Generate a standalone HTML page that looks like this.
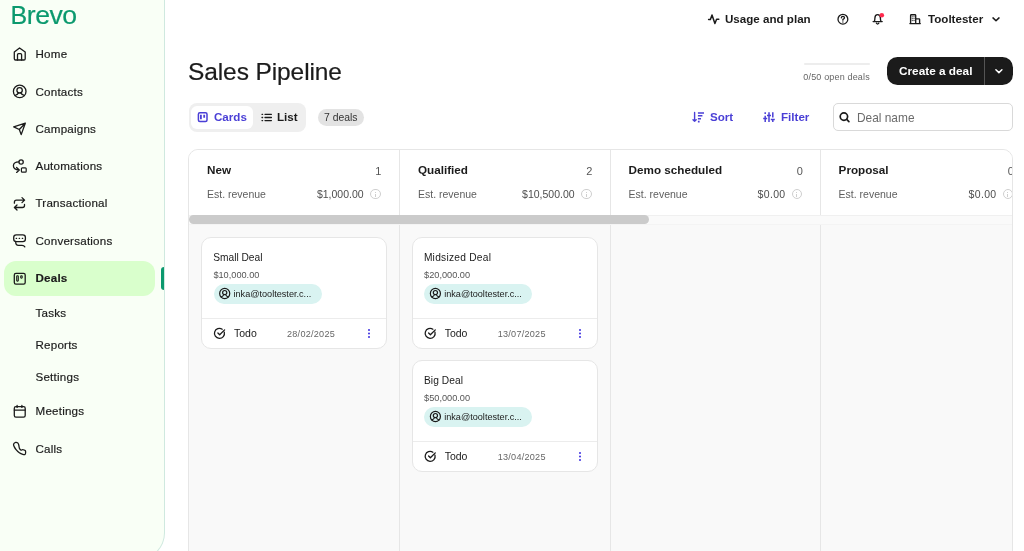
<!DOCTYPE html>
<html lang="en">
<head>
<meta charset="utf-8">
<title>Sales Pipeline</title>
<style>
*{box-sizing:border-box;margin:0;padding:0}
html,body{width:1024px;height:551px;overflow:hidden;background:#fff}
body{font-family:"Liberation Sans",Arial,sans-serif;color:#1f2d3d;position:relative;font-size:12px;will-change:transform}
.abs{position:absolute}
svg{display:block;overflow:visible}
/* sidebar */
#side{position:absolute;left:0;top:0;width:165px;height:560px;background:#f9fff6;border-right:1px solid #cfe9df;border-bottom:1px solid #cfe9df;border-bottom-right-radius:27px}
#logo{position:absolute;left:10.6px;top:-1px;font-size:25px;line-height:32px;color:#0b996e;letter-spacing:-0.5px;-webkit-text-stroke:0.2px #0b996e;white-space:nowrap}
#logo span{font-size:26.6px}
.nav{position:absolute;left:35.5px;margin-top:1px;font-size:11.6px;line-height:16px;color:#1b1b1b;letter-spacing:0.22px;white-space:nowrap;-webkit-text-stroke:0.18px #1b1b1b}
.ico{position:absolute;left:12px;width:15px;height:15px}
#pill{position:absolute;left:4px;top:261.4px;width:151px;height:34.5px;border-radius:12px;background:#d9ffcc}
#ind{position:absolute;left:161px;top:267px;width:6px;height:23px;border-radius:3px;background:#0b996e}
#indclip{position:absolute;left:0;top:0;width:164px;height:551px;overflow:hidden}
/* top bar */
.tb{position:absolute;font-weight:700;font-size:11.6px;line-height:16px;color:#1b1b1b;white-space:nowrap}
#title{position:absolute;left:188px;top:57px;font-size:24.5px;line-height:30px;color:#1b1b1b;letter-spacing:-0.1px;white-space:nowrap;-webkit-text-stroke:0.2px #1b1b1b}
#prog{position:absolute;left:803.5px;top:62.9px;width:66px;height:2.6px;border-radius:2px;background:#ededed}
#progt{position:absolute;left:801.6px;top:72px;width:70px;text-align:center;font-size:9px;line-height:10px;letter-spacing:0.16px;color:#666;white-space:nowrap}
#create{position:absolute;left:887px;top:57px;width:126px;height:28.3px;border-radius:10.5px;background:#1b1b1b;color:#fff;font-weight:700;font-size:11.8px;line-height:28px}
#create span{position:absolute;left:12px;top:0}
#create i{position:absolute;left:96.6px;top:0;width:1px;height:28.3px;background:#555}
#toggle{position:absolute;left:188.5px;top:103px;width:117.5px;height:28.6px;border-radius:8px;background:#efefef}
#tcards{position:absolute;left:2.6px;top:2.9px;width:62px;height:23px;border-radius:6px;background:#fff}
#badge{position:absolute;left:318px;top:108.6px;width:45.6px;height:17.3px;border-radius:9px;background:#e3e3e3;font-size:10.4px;line-height:17.3px;text-align:center;color:#333}
.pur{color:#4a3fd6}
#search{position:absolute;left:833px;top:103px;width:180px;height:28.4px;border:1px solid #d9d9d9;border-radius:5px;background:#fff}
#search span{position:absolute;left:23px;top:6px;font-size:11.9px;line-height:16px;color:#6b6b6b}
/* board */
#board{position:absolute;left:188px;top:149px;width:825px;height:420px;border:1px solid #e6e6e6;border-radius:10px 10px 0 0;overflow:hidden;background:#f9f9f9}
.col{position:absolute;top:0;width:210px;height:420px}
.dv{position:absolute;top:0;width:1px;height:420px;background:#e6e6e6}
.hd{position:absolute;left:0;top:0;width:100%;height:64.5px;background:#fff}
.hd b{position:absolute;left:18px;top:12.4px;font-size:11.7px;line-height:16px;color:#1b1b1b;white-space:nowrap}
.hd .n{position:absolute;right:17.7px;top:13px;font-size:11px;line-height:16px;color:#555}
.hd .e{position:absolute;left:18px;top:37px;font-size:10.5px;line-height:14px;color:#5e5e5e;white-space:nowrap}
.hd .v{position:absolute;right:35.4px;top:37px;font-size:10.5px;line-height:14px;color:#4e4e4e;white-space:nowrap}
.hd .i{position:absolute;right:18.5px;top:38.8px;width:10.4px;height:10.4px;border:1px solid #cfcfcf;border-radius:50%}
.hd .i:before{content:"";position:absolute;left:3.7px;top:2px;width:1px;height:1px;background:#cfcfcf}
.hd .i:after{content:"";position:absolute;left:3.7px;top:4px;width:1px;height:3px;background:#cfcfcf}
#track{position:absolute;left:0;top:64.5px;width:100%;height:10.8px;background:#fafafa;border-top:1px solid #f0f0f0;border-bottom:1px solid #f4f4f4}
#thumb{position:absolute;left:0;top:64.7px;width:460px;height:9.8px;border-radius:5px;background:#cbcbcb}
.card{position:absolute;left:12px;width:186px;height:111.7px;border:1px solid #e6e6e6;border-radius:10px;background:#fff}
.card .t{position:absolute;left:11.2px;top:12.6px;font-size:10.2px;line-height:14px;color:#1b1b1b;white-space:nowrap}
.card .a{position:absolute;left:11.4px;top:31px;font-size:9.2px;line-height:12px;color:#555;white-space:nowrap}
.card .chip{position:absolute;left:11.6px;top:45.6px;width:108.2px;height:20px;border-radius:10px;background:#d9f3f1}
.card .chip span{position:absolute;left:19.9px;top:4px;font-size:9.15px;line-height:12px;color:#1b1b1b;white-space:nowrap}
.card .ft{position:absolute;left:0;top:80px;width:100%;height:30px;border-top:1px solid #ececec}
.card .ft .td{position:absolute;left:32px;top:7px;font-size:10.5px;line-height:14px;color:#1b1b1b}
.card .ft .dt{position:absolute;left:85px;top:9.3px;letter-spacing:0.25px;font-size:9.1px;line-height:12px;color:#666;white-space:nowrap}
.card .ft .k{position:absolute;left:166.2px;top:9.7px;width:2.3px;height:2.3px;border-radius:50%;background:#3d2fe0;box-shadow:0 3.55px 0 #3d2fe0,0 7.1px 0 #3d2fe0}
</style>
</head>
<body>
<div id="side">
  <div id="logo">B<span>revo</span></div>
  <div id="pill"></div>
  <div id="indclip"><div id="ind"></div></div>
  <div class="nav" style="top:45px">Home</div>
  <div class="nav" style="top:83px">Contacts</div>
  <div class="nav" style="top:120px">Campaigns</div>
  <div class="nav" style="top:157px">Automations</div>
  <div class="nav" style="top:194px">Transactional</div>
  <div class="nav" style="top:232px">Conversations</div>
  <div class="nav" style="top:269px;font-weight:700">Deals</div>
  <div class="nav" style="top:304px">Tasks</div>
  <div class="nav" style="top:336px">Reports</div>
  <div class="nav" style="top:368px">Settings</div>
  <div class="nav" style="top:402px">Meetings</div>
  <div class="nav" style="top:440px">Calls</div>
</div>

<div class="tb" style="left:725px;top:11px">Usage and plan</div>
<div class="tb" style="left:928px;top:11px">Tooltester</div>

<div id="title">Sales Pipeline</div>
<div id="prog"></div>
<div id="progt">0/50 open deals</div>
<div id="create"><span>Create a deal</span><i></i></div>

<div id="toggle"><div id="tcards"></div></div>
<div class="tb pur" style="left:214px;top:109px">Cards</div>
<div class="tb" style="left:277px;top:109px">List</div>
<div id="badge">7 deals</div>
<div class="tb pur" style="left:710px;top:109px">Sort</div>
<div class="tb pur" style="left:781px;top:109px">Filter</div>
<div id="search"><span>Deal name</span></div>

<div id="board">
  <div class="col" style="left:0"><div class="hd"><b>New</b><span class="n">1</span><span class="e">Est. revenue</span><span class="v">$1,000.00</span><span class="i"></span></div></div>
  <div class="col" style="left:211px"><div class="hd"><b>Qualified</b><span class="n">2</span><span class="e">Est. revenue</span><span class="v">$10,500.00</span><span class="i"></span></div></div>
  <div class="col" style="left:421.6px"><div class="hd"><b>Demo scheduled</b><span class="n">0</span><span class="e">Est. revenue</span><span class="v" style="letter-spacing:0.35px;margin-right:-0.35px">$0.00</span><span class="i"></span></div></div>
  <div class="col" style="left:631.6px;width:211px"><div class="hd"><b>Proposal</b><span class="n">0</span><span class="e">Est. revenue</span><span class="v" style="letter-spacing:0.35px;margin-right:-0.35px">$0.00</span><span class="i"></span></div></div>
  <div class="dv" style="left:210px"></div><div class="dv" style="left:421px"></div><div class="dv" style="left:631px"></div>
  <div id="track"></div><div id="thumb"></div>

  <div class="card" style="top:87px"><div class="t">Small Deal</div><div class="a">$10,000.00</div><div class="chip"><span>inka@tooltester.c...</span></div><div class="ft"><span class="td">Todo</span><span class="dt">28/02/2025</span><span class="k"></span></div></div>
  <div class="card" style="left:222.7px;top:87px"><div class="t" style="letter-spacing:0.26px">Midsized Deal</div><div class="a">$20,000.00</div><div class="chip"><span>inka@tooltester.c...</span></div><div class="ft"><span class="td">Todo</span><span class="dt">13/07/2025</span><span class="k"></span></div></div>
  <div class="card" style="left:222.7px;top:210px"><div class="t" style="letter-spacing:0.1px">Big Deal</div><div class="a">$50,000.00</div><div class="chip"><span>inka@tooltester.c...</span></div><div class="ft"><span class="td">Todo</span><span class="dt">13/04/2025</span><span class="k"></span></div></div>
</div>

<svg id="icons" class="abs" style="left:0;top:0" width="1024" height="551" viewBox="0 0 1024 551" fill="none" stroke="#1b1b1b" stroke-width="1.3" stroke-linecap="round" stroke-linejoin="round">
  <!-- home -->
  <path d="M14.3 52.1 L19.55 47.9 L25.2 52.1 V58.7 Q25.2 60 23.9 60 H15.6 Q14.3 60 14.3 58.7 Z"/>
  <path d="M17.5 60 V54.7 Q17.5 53.7 18.5 53.7 H20.6 Q21.6 53.7 21.6 54.7 V60"/>
  <!-- contacts -->
  <circle cx="19.7" cy="91.4" r="6.3"/>
  <circle cx="19.6" cy="90.3" r="2.7"/>
  <path d="M15 95.5 Q17.6 94.6 18.6 92.9 M24.4 95.5 Q21.7 94.6 20.7 92.9"/>
  <!-- campaigns -->
  <path d="M25.3 123.2 L13.7 126.9 L19.3 129.5 L21.2 134.6 Z M19.3 129.5 L25.3 123.2"/>
  <!-- automations -->
  <circle cx="21.1" cy="162" r="2.15"/>
  <rect x="21.4" y="167.9" width="4.8" height="4.3" rx="0.9" stroke-width="1.2"/>
  <path d="M18.9 161.9 Q13.5 162 13.4 165.8 Q13.4 169.6 19.2 170 M16.6 167.5 L19.3 170 L16.6 172.4"/>
  <!-- transactional -->
  <path d="M14.4 203.2 V202.2 Q14.4 200.1 16.5 200.1 H24.4 M22 197.6 L24.6 200.1 L22 202.6"/>
  <path d="M24.5 204.4 V205.4 Q24.5 207.5 22.4 207.5 H14.6 M17 205 L14.4 207.5 L17 210"/>
  <!-- conversations -->
  <rect x="13.7" y="234.9" width="11.7" height="6.8" rx="2.6"/>
  <path d="M16.2 238.4h.4 M19.2 238.4h.4 M22.3 238.4h.4" stroke-width="1.2"/>
  <path d="M15.7 241.3 Q15.4 245.3 18.5 245.4 H22 Q24 245.5 24.8 246.9"/>
  <!-- deals -->
  <rect x="14.3" y="273.4" width="10.9" height="10.7" rx="1.6"/>
  <rect x="16.7" y="275.8" width="1.6" height="5.3" rx="0.6" stroke-width="1.1"/>
  <rect x="20.7" y="275.8" width="1.5" height="2.4" rx="0.6" stroke-width="1.1"/>
  <!-- meetings -->
  <rect x="14.3" y="406.6" width="10.9" height="10.5" rx="1.6"/>
  <path d="M14.3 410.1 H25.2 M17.1 405.4 V407.4 M21.9 405.4 V407.4"/>
  <!-- calls -->
  <path d="M13.57 444.28 C13.79 443.54 14.91 442.67 15.62 442.45 C16.32 442.23 17.29 442.59 17.80 442.97 C18.31 443.35 18.45 444.06 18.67 444.71 C18.89 445.36 18.96 446.24 19.10 446.89 C19.25 447.54 19.21 448.09 19.54 448.63 C19.87 449.17 20.56 449.99 21.07 450.15 C21.58 450.31 21.90 449.52 22.59 449.59 C23.28 449.66 24.69 450.10 25.20 450.59 C25.71 451.08 25.68 451.90 25.64 452.55 C25.61 453.20 25.46 454.20 24.99 454.51 C24.52 454.81 23.75 454.67 22.81 454.38 C21.86 454.09 20.41 453.51 19.32 452.77 C18.23 452.03 17.11 450.92 16.28 449.94 C15.45 448.96 14.77 447.83 14.32 446.89 C13.87 445.95 13.35 445.02 13.57 444.28 Z"/>
  <!-- pulse -->
  <path d="M708.6 19.4 H710.4 L712 14.9 L714.9 23.5 L716.6 19.3 H718.8" stroke-width="1.5"/>
  <!-- help -->
  <circle cx="842.9" cy="19.2" r="4.9"/>
  <path d="M841.3 17.9 Q841.4 16.4 842.9 16.4 Q844.5 16.4 844.5 17.8 Q844.5 18.7 842.9 19.4 V20.2 M842.9 21.9 v.2" stroke-width="1.3"/>
  <!-- bell -->
  <path d="M873.1 21.6 H882.2 M874.3 21.5 Q874.9 20.2 874.9 18 Q875 14.6 877.6 14.6 Q880.3 14.6 880.4 18 Q880.4 20.2 881 21.5 M876.4 23.2 Q877.6 24.9 878.8 23.2" stroke-width="1.35"/>
  <circle cx="881.8" cy="15.2" r="2.3" fill="#ff2a4d" stroke="none"/>
  <!-- building -->
  <path d="M909.9 23.6 H920.3 M910.6 23.4 V15.5 Q910.6 14.7 911.4 14.7 H914.9 Q915.7 14.7 915.7 15.5 V23.4 M915.7 18.9 H919 Q919.6 18.9 919.6 19.5 V23.4" stroke-width="1.35"/>
  <path d="M912 16.8 h.7 M913.7 16.8 h.7 M912 18.7 h.7 M913.7 18.7 h.7 M912 20.6 h.7 M913.7 20.6 h.7" stroke-width="1" stroke="#555"/>
  <!-- chevron -->
  <path d="M993 17.9 L996 20.8 L999 17.9" stroke-width="1.5"/>
  <!-- create chevron -->
  <path d="M995.9 69.7 L998.9 72.6 L1001.9 69.7" stroke="#fff" stroke-width="1.5"/>
  <!-- cards icon -->
  <g stroke="#4a3fd6">
  <rect x="198.4" y="112.8" width="8.6" height="8.8" rx="1.5" stroke-width="1.5"/>
  <path d="M200.9 114.7 V119.3 M204.2 114.7 V117.7" stroke-width="1.8" stroke-linecap="butt"/>
  <!-- sort -->
  <path d="M694.6 112.5 V121.2 M693 119.7 L694.6 121.3 L696.2 119.7" stroke-width="1.4"/>
  <path d="M697.9 113 H704 M697.9 115.8 H702.4 M697.9 118.8 H701 M697.9 121.6 H699.6" stroke-width="1.6" stroke-linecap="butt"/>
  <!-- filter -->
  <path d="M765.2 112.3 V114 M765.2 115.8 V121.9 M763.2 118.4 H767.2 M769 112.3 V121.9 M767 115.4 H771 M772.8 112.3 V117.4 M772.8 119 V121.9 M770.8 119.4 H774.8" stroke-width="1.5" stroke-linecap="butt"/>
  </g>
  <!-- list icon -->
  <path d="M262 114.3 h.6 M262 117.5 h.6 M262 120.6 h.6 M265 114.3 H271.4 M265 117.5 H271.4 M265 120.6 H271.4" stroke-width="1.3"/>
<g transform="translate(201 237)" stroke-width="1.2">
  <circle cx="23.7" cy="56.5" r="5.05"/><circle cx="23.7" cy="55.6" r="2.1"/><path d="M20 59.9 Q22 59.2 22.8 57.7 M27.4 59.9 Q25.4 59.2 24.6 57.7" stroke-width="1.1"/>
  <path d="M23.3 95.2 A5 5 0 1 1 21.2 92.2 M16.9 96 L18.7 97.8 L23.6 92.9" stroke-width="1.3"/>
</g>
<g transform="translate(411.7 237)" stroke-width="1.2">
  <circle cx="23.7" cy="56.5" r="5.05"/><circle cx="23.7" cy="55.6" r="2.1"/><path d="M20 59.9 Q22 59.2 22.8 57.7 M27.4 59.9 Q25.4 59.2 24.6 57.7" stroke-width="1.1"/>
  <path d="M23.3 95.2 A5 5 0 1 1 21.2 92.2 M16.9 96 L18.7 97.8 L23.6 92.9" stroke-width="1.3"/>
</g>
<g transform="translate(411.7 360)" stroke-width="1.2">
  <circle cx="23.7" cy="56.5" r="5.05"/><circle cx="23.7" cy="55.6" r="2.1"/><path d="M20 59.9 Q22 59.2 22.8 57.7 M27.4 59.9 Q25.4 59.2 24.6 57.7" stroke-width="1.1"/>
  <path d="M23.3 95.2 A5 5 0 1 1 21.2 92.2 M16.9 96 L18.7 97.8 L23.6 92.9" stroke-width="1.3"/>
</g>
  <!-- search -->
  <circle cx="843.9" cy="116.6" r="3.7" stroke-width="1.7"/>
  <path d="M846.7 119.4 L848.9 121.6" stroke-width="1.7"/>
</svg>
</body>
</html>
